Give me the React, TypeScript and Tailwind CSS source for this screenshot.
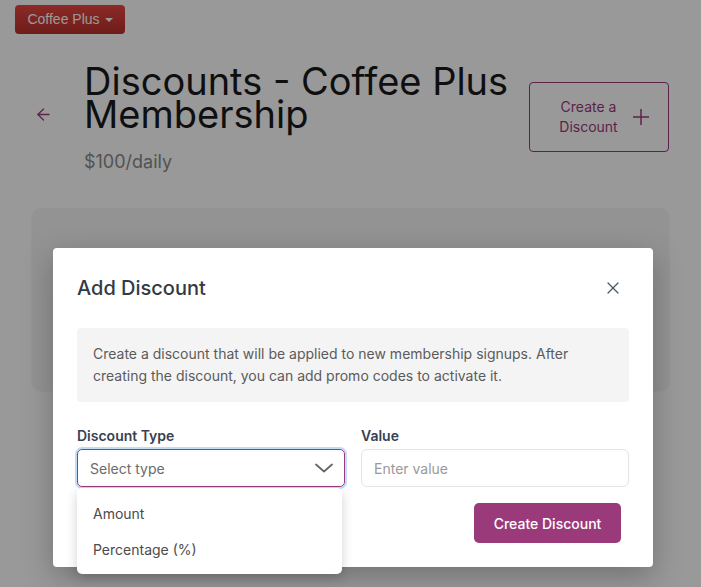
import { ArrowLeft, X } from "lucide-react";

const font = { fontFamily: "Inter, 'Noto Sans', sans-serif" };

function PlusIcon() {
  return (
    <svg width="16" height="16" viewBox="0 0 16 16" fill="none" stroke="currentColor" strokeWidth="1.5">
      <path d="M8 0v16M0 8h16" />
    </svg>
  );
}

function Chevron() {
  return (
    <svg width="18" height="10" viewBox="0 0 18 10" fill="none" stroke="#666" strokeWidth="1.8" strokeLinecap="round" strokeLinejoin="round">
      <path d="M1 1.5l8 7 8-7" />
    </svg>
  );
}

function Page() {
  return (
    <div className="min-h-[587px] bg-white" style={font}>
      <div className="px-[15px] pt-[5px]">
        <button
          className="flex h-[29px] w-[110px] items-center justify-center gap-[5px] rounded-[4px] bg-gradient-to-b from-[#e9473f] to-[#b8302d] text-[14px] text-white"
          style={{ fontFamily: "'Liberation Sans', Arial, sans-serif" }}
        >
          Coffee Plus
          <span className="mt-[1px] h-0 w-0 border-x-[4px] border-t-[4px] border-x-transparent border-t-white" />
        </button>
      </div>

      <div className="px-[32px]">
        <div className="mt-[31px] flex items-start">
          <div className="mt-[40px] w-[52px] pl-[2px] text-[#9b3a7b]">
            <ArrowLeft size={19} strokeWidth={1.6} />
          </div>
          <div className="flex-1">
            <h1 className="whitespace-nowrap text-[38px] leading-[33px] font-normal text-[#1a1a1a]">
              Discounts - Coffee Plus
              <br />
              Membership
            </h1>
            <div className="mt-[17px] text-[18px] leading-[28px] text-[#8a8a8a]">$100/daily</div>
          </div>
          <button className="mt-[17px] flex h-[70px] w-[140px] items-center justify-center gap-[15px] rounded-[4px] border border-[#9b3a7b] pl-[10px] text-[14px] leading-[20px] text-[#9b3a7b]">
            <span className="text-center">
              Create a
              <br />
              Discount
            </span>
            <PlusIcon />
          </button>
        </div>

        <div className="mt-[32px] h-[182px] rounded-[10px] bg-[#f5f5f5] shadow-[0_1px_3px_rgba(0,0,0,0.08)]" />
      </div>
    </div>
  );
}

function Modal() {
  return (
    <div className="absolute left-[53px] top-[248px] w-[600px] rounded-[4px] bg-white p-[24px] shadow-[0_10px_30px_rgba(0,0,0,0.25)]" style={font}>
      <div className="flex h-[32px] items-center justify-between">
        <h2 className="text-[20px] font-medium text-[#333a45]">Add Discount</h2>
        <button className="flex h-[32px] w-[32px] items-center justify-center text-[#4b5563]">
          <X size={20} strokeWidth={1.5} />
        </button>
      </div>

      <div className="mt-[24px] rounded-[4px] bg-[#f4f4f4] px-[16px] py-[15px] text-[14px] leading-[22px] text-[#5b5b5b]">
        Create a discount that will be applied to new membership signups. After creating the discount, you can add promo codes to activate it.
      </div>

      <div className="mt-[24px] grid grid-cols-2 gap-[16px]">
        <div>
          <label className="block text-[14px] leading-[20px] font-semibold text-[#374151]">Discount Type</label>
          <div className="relative mt-[3px]">
            <div className="flex h-[38px] items-center justify-between rounded-[5px] border border-[#9b3a7b] pl-[12px] pr-[11px] text-[14px] text-[#6b6b6b] shadow-[0_0_0_2px_#bfdcfb]">
              Select type
              <Chevron />
            </div>
            <div className="absolute left-0 top-[39px] z-10 w-[265px] rounded-[5px] bg-white py-[7px] text-[14px] text-[#4b4b4b] shadow-[0_4px_12px_rgba(0,0,0,0.18)]">
              <div className="flex h-[36px] items-center px-[16px]">Amount</div>
              <div className="flex h-[36px] items-center px-[16px]">Percentage (%)</div>
            </div>
          </div>
        </div>
        <div>
          <label className="block text-[14px] leading-[20px] font-semibold text-[#374151]">Value</label>
          <input
            placeholder="Enter value"
            className="mt-[3px] h-[38px] w-full rounded-[6px] border border-[#e2e4e8] px-[12px] text-[14px] outline-none placeholder:text-[#9a9a9a]"
          />
        </div>
      </div>

      <div className="mt-[16px] flex justify-end pr-[8px]">
        <button className="h-[40px] w-[147px] rounded-[5px] bg-[#9b3a7b] text-[14px] font-medium text-white">
          Create Discount
        </button>
      </div>
    </div>
  );
}

export default function App() {
  return (
    <div className="relative h-[587px] w-[701px] overflow-hidden">
      <Page />
      <div className="absolute inset-0 bg-black/40" />
      <Modal />
    </div>
  );
}
